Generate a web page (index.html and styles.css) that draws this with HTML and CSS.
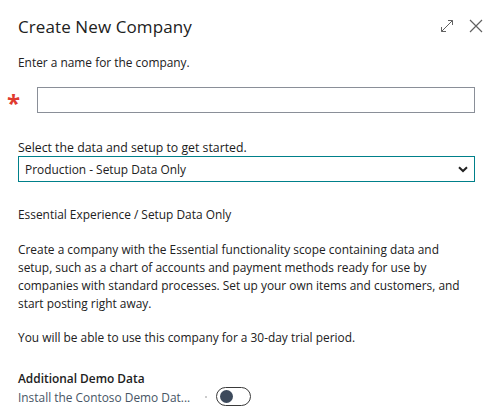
FILE: index.html
```html
<!DOCTYPE html>
<html>
<head>
<meta charset="utf-8">
<link rel="stylesheet" href="styles.css">
</head>
<body>
<div class="dialog">
  <div class="header">
    <h1 class="title">Create New Company</h1>
    <div class="actions">
      <svg class="icon" width="16" height="16" viewBox="0 0 16 16">
        <path d="M2.5 13.5 L13.5 2.5 M9 2.5 H13.5 V7 M2.5 9 V13.5 H7" fill="none" stroke="#616161" stroke-width="1"/>
      </svg>
      <svg class="icon" width="16" height="16" viewBox="0 0 16 16">
        <path d="M2 2 L14 14 M14 2 L2 14" fill="none" stroke="#616161" stroke-width="1.2"/>
      </svg>
    </div>
  </div>
  <p class="prompt">Enter a name for the company.</p>
  <div class="name-row">
    <span class="req">*</span>
    <div class="input"></div>
  </div>
  <div class="select-label">Select the data and setup to get started.</div>
  <div class="select">
    <span>Production - Setup Data Only</span>
    <svg width="10" height="7" viewBox="0 0 10 7"><path d="M1 1.2 L5 5 L9 1.2" fill="none" stroke="#222" stroke-width="2"/></svg>
  </div>
  <p class="scope">Essential Experience / Setup Data Only</p>
  <p class="desc">Create a company with the Essential functionality scope containing data and setup, such as a chart of accounts and payment methods ready for use by companies with standard processes. Set up your own items and customers, and start posting right away.</p>
  <p class="trial">You will be able to use this company for a 30-day trial period.</p>
  <div class="demo-title">Additional Demo Data</div>
  <div class="demo-row">
    <span class="demo-label">Install the Contoso Demo Dat...</span>
    <span class="dot"></span>
    <span class="toggle"><span class="knob"></span></span>
  </div>
</div>
</body>
</html>
```
FILE: styles.css
```css
* { box-sizing: border-box; }
html, body { margin: 0; padding: 0; background: #fff; }
body {
  font-family: "Open Sans", "Noto Sans", sans-serif;
  color: #212121;
  font-size: 11.9px;
}
.dialog {
  padding: 12px 13px 0 18px;
  width: 497px;
}
.header {
  display: flex;
  justify-content: space-between;
  align-items: center;
  height: 28px;
}
.title {
  margin: 0;
  font-size: 17px;
  font-weight: 400;
  color: #212121;
  letter-spacing: 0.1px;
}
.actions {
  display: flex;
  gap: 13px;
  align-items: center;
}
.prompt {
  margin: 14px 0 0 0;
  line-height: 16px;
}
.name-row {
  display: flex;
  align-items: center;
  margin-left: -11px;
  margin-top: 17px;
}
.req {
  color: #e03a2f;
  font-size: 24px;
  line-height: 26px;
  width: 30px;
  font-weight: 700;
  height: 26px;
  padding-top: 3px;
}
.input {
  flex: 1;
  height: 26px;
  border: 1px solid #8a8f98;
  margin-right: 9px;
}
.select-label {
  margin-top: 27px;
  line-height: 16px;
  font-size: 12.3px;
  color: #1a1a1a;
}
.select {
  display: flex;
  justify-content: space-between;
  align-items: center;
  height: 26px;
  border: 1.5px solid #00808a;
  margin-right: 9px;
  padding: 0 6px 0 6px;
}
.scope {
  margin: 24px 0 0 0;
  line-height: 16px;
}
.desc {
  margin: 18px 0 0 0;
  line-height: 18px;
  padding-right: 8px;
}
.trial {
  margin: 17px 0 0 0;
  line-height: 16px;
}
.demo-title {
  margin-top: 25px;
  font-weight: 600;
  line-height: 16px;
}
.demo-row {
  display: flex;
  align-items: center;
  margin-top: 1px;
}
.demo-label {
  color: #475565;
  width: 187px;
  white-space: nowrap;
}
.dot {
  width: 2px;
  height: 2px;
  background: #bbb;
  border-radius: 50%;
  margin-right: 9px;
}
.toggle {
  width: 35px;
  height: 19px;
  border: 1px solid #3a3a3a;
  border-radius: 10px;
  display: flex;
  align-items: center;
  padding-left: 3px;
}
.knob {
  width: 13px;
  height: 13px;
  border-radius: 50%;
  background: #3d4a5c;
}
```
